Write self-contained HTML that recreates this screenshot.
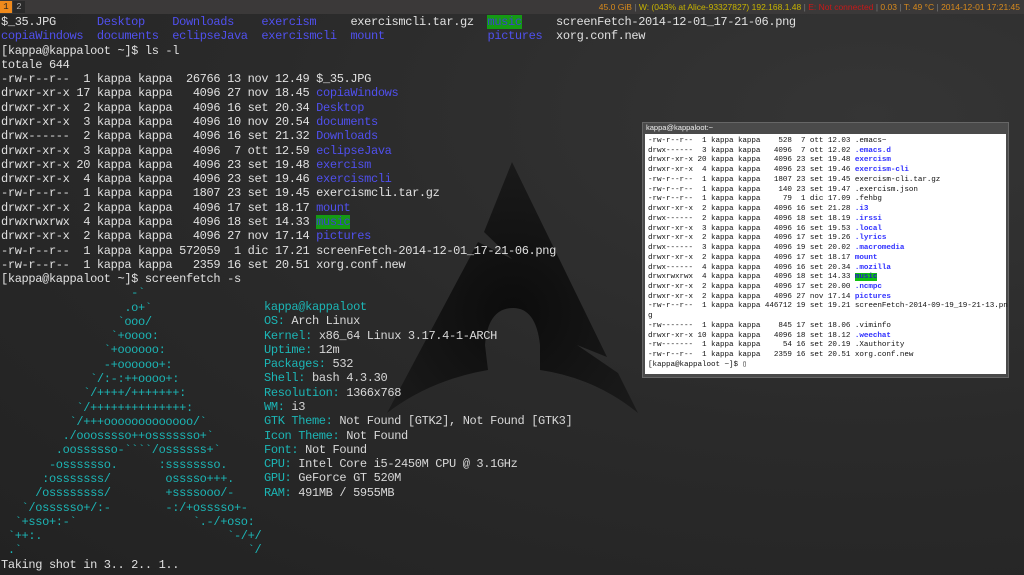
<!DOCTYPE html>
<html><head><meta charset="utf-8"><style>
html,body{margin:0;padding:0;width:1024px;height:575px;overflow:hidden;}
body{background:radial-gradient(ellipse at 85% 20%,#353535 0%,#2a2a2a 50%,#222 100%);position:relative;font-family:"Liberation Mono",monospace;}
#bar{position:absolute;left:0;top:0;width:1024px;height:14px;background:#3b3939;}
.tab{position:absolute;top:1px;height:12px;width:12px;font-size:9px;line-height:12px;text-align:center;}
#st{position:absolute;right:4px;top:1px;font-family:"Liberation Sans",sans-serif;font-size:8.5px;line-height:12px;white-space:pre;color:#c07020}
pre{margin:0;position:absolute;font-family:"Liberation Mono",monospace;font-size:12px;letter-spacing:-0.35px;line-height:14.28px;color:#e0e0e0;white-space:pre;}
.b{color:#5050ee}
.g{color:#4040d0;background:#149a14}
.c{color:#1cb5b5}
.v{color:#d8d8d8}
#win{position:absolute;left:642px;top:122px;width:367px;height:256px;background:#4a4a4a;border:1px solid #666;box-sizing:border-box;}
#wt{position:absolute;left:3px;top:0;font-family:"Liberation Sans",sans-serif;font-size:7.5px;color:#eee;line-height:10px}
#wb{position:absolute;left:2px;top:11px;width:361px;height:240px;background:#fff;}
#wb pre{position:absolute;left:3px;top:3px;font-size:7.6px;letter-spacing:-0.06px;line-height:9.74px;color:#111}
#wb .b{color:#3030ff;font-weight:bold}
#wb .g{color:#2020c0;background:#10c010;font-weight:bold}
</style></head><body>
<svg width="1024" height="575" style="position:absolute;left:0;top:0">
<defs><radialGradient id="lg" cx="50%" cy="60%" r="60%"><stop offset="0" stop-color="#0c0c0c"/><stop offset="1" stop-color="#1a1a1a"/></radialGradient></defs>
<path fill="url(#lg)" d="M512,162 L607,357 L577,345 L618,373 L638,413 Q595,378 540,370 L540,345 Q536,308 513,308 Q488,308 485,345 L488,370 Q430,380 387,413 L478,242 L512,259 L484,232 Z"/>
</svg>
<div id="bar">
<div class="tab" style="left:0;background:#f08a1c;color:#222">1</div>
<div class="tab" style="left:13px;background:#2a2a2a;color:#aaa">2</div>
<div id="st"><span style="color:#d88a1c">45.0 GiB</span> <span style="color:#777">|</span> <span style="color:#c8b400">W: (043% at Alice-93327827) 192.168.1.48</span> <span style="color:#777">|</span> <span style="color:#c81818">E: Not connected</span> <span style="color:#777">|</span> <span style="color:#d88a1c">0.03</span> <span style="color:#777">|</span> <span style="color:#d88a1c">T: 49 °C</span> <span style="color:#777">|</span> <span style="color:#d88a1c">2014-12-01 17:21:45</span></div>
</div>
<pre style="left:1px;top:15px">$_35.JPG      <span class="b">Desktop</span>    <span class="b">Downloads</span>    <span class="b">exercism</span>     exercismcli.tar.gz  <span class="g">music</span>     screenFetch-2014-12-01_17-21-06.png
<span class="b">copiaWindows</span>  <span class="b">documents</span>  <span class="b">eclipseJava</span>  <span class="b">exercismcli</span>  <span class="b">mount</span>               <span class="b">pictures</span>  xorg.conf.new
[kappa@kappaloot ~]$ ls -l
totale 644
-rw-r--r--  1 kappa kappa  26766 13 nov 12.49 $_35.JPG
drwxr-xr-x 17 kappa kappa   4096 27 nov 18.45 <span class="b">copiaWindows</span>
drwxr-xr-x  2 kappa kappa   4096 16 set 20.34 <span class="b">Desktop</span>
drwxr-xr-x  3 kappa kappa   4096 10 nov 20.54 <span class="b">documents</span>
drwx------  2 kappa kappa   4096 16 set 21.32 <span class="b">Downloads</span>
drwxr-xr-x  3 kappa kappa   4096  7 ott 12.59 <span class="b">eclipseJava</span>
drwxr-xr-x 20 kappa kappa   4096 23 set 19.48 <span class="b">exercism</span>
drwxr-xr-x  4 kappa kappa   4096 23 set 19.46 <span class="b">exercismcli</span>
-rw-r--r--  1 kappa kappa   1807 23 set 19.45 exercismcli.tar.gz
drwxr-xr-x  2 kappa kappa   4096 17 set 18.17 <span class="b">mount</span>
drwxrwxrwx  4 kappa kappa   4096 18 set 14.33 <span class="g">music</span>
drwxr-xr-x  2 kappa kappa   4096 27 nov 17.14 <span class="b">pictures</span>
-rw-r--r--  1 kappa kappa 572059  1 dic 17.21 screenFetch-2014-12-01_17-21-06.png
-rw-r--r--  1 kappa kappa   2359 16 set 20.51 xorg.conf.new
[kappa@kappaloot ~]$ screenfetch -s
<span class="c">                   -&#96;
                  .o+&#96;
                 &#96;ooo/
                &#96;+oooo:
               &#96;+oooooo:
               -+oooooo+:
             &#96;/:-:++oooo+:
            &#96;/++++/+++++++:
           &#96;/++++++++++++++:
          &#96;/+++ooooooooooooo/&#96;
         ./ooosssso++osssssso+&#96;
        .oossssso-&#96;&#96;&#96;&#96;/ossssss+&#96;
       -osssssso.      :ssssssso.
      :osssssss/        osssso+++.
     /ossssssss/        +ssssooo/-
   &#96;/ossssso+/:-        -:/+osssso+-
  &#96;+sso+:-&#96;                 &#96;.-/+oso:
 &#96;++:.                           &#96;-/+/
 .&#96;                                 &#96;/</span>
Taking shot in 3.. 2.. 1..</pre>
<pre style="left:264px;top:300px"><span class="c">kappa@kappaloot</span>
<span class="c">OS:</span> <span class="v">Arch Linux</span>
<span class="c">Kernel:</span> <span class="v">x86_64 Linux 3.17.4-1-ARCH</span>
<span class="c">Uptime:</span> <span class="v">12m</span>
<span class="c">Packages:</span> <span class="v">532</span>
<span class="c">Shell:</span> <span class="v">bash 4.3.30</span>
<span class="c">Resolution:</span> <span class="v">1366x768</span>
<span class="c">WM:</span> <span class="v">i3</span>
<span class="c">GTK Theme:</span> <span class="v">Not Found [GTK2], Not Found [GTK3]</span>
<span class="c">Icon Theme:</span> <span class="v">Not Found</span>
<span class="c">Font:</span> <span class="v">Not Found</span>
<span class="c">CPU:</span> <span class="v">Intel Core i5-2450M CPU @ 3.1GHz</span>
<span class="c">GPU:</span> <span class="v">GeForce GT 520M</span>
<span class="c">RAM:</span> <span class="v">491MB / 5955MB</span></pre>
<div id="win"><div id="wt">kappa@kappaloot:~</div><div id="wb"><pre>-rw-r--r--  1 kappa kappa    528  7 ott 12.03 .emacs~
drwx------  3 kappa kappa   4096  7 ott 12.02 <span class="b">.emacs.d</span>
drwxr-xr-x 20 kappa kappa   4096 23 set 19.48 <span class="b">exercism</span>
drwxr-xr-x  4 kappa kappa   4096 23 set 19.46 <span class="b">exercism-cli</span>
-rw-r--r--  1 kappa kappa   1807 23 set 19.45 exercism-cli.tar.gz
-rw-r--r--  1 kappa kappa    140 23 set 19.47 .exercism.json
-rw-r--r--  1 kappa kappa     79  1 dic 17.09 .fehbg
drwxr-xr-x  2 kappa kappa   4096 16 set 21.28 <span class="b">.i3</span>
drwx------  2 kappa kappa   4096 18 set 18.19 <span class="b">.irssi</span>
drwxr-xr-x  3 kappa kappa   4096 16 set 19.53 <span class="b">.local</span>
drwxr-xr-x  2 kappa kappa   4096 17 set 19.26 <span class="b">.lyrics</span>
drwx------  3 kappa kappa   4096 19 set 20.02 <span class="b">.macromedia</span>
drwxr-xr-x  2 kappa kappa   4096 17 set 18.17 <span class="b">mount</span>
drwx------  4 kappa kappa   4096 16 set 20.34 <span class="b">.mozilla</span>
drwxrwxrwx  4 kappa kappa   4096 18 set 14.33 <span class="g">music</span>
drwxr-xr-x  2 kappa kappa   4096 17 set 20.00 <span class="b">.ncmpc</span>
drwxr-xr-x  2 kappa kappa   4096 27 nov 17.14 <span class="b">pictures</span>
-rw-r--r--  1 kappa kappa 446712 19 set 19.21 screenFetch-2014-09-19_19-21-13.pn
g
-rw-------  1 kappa kappa    845 17 set 18.06 .viminfo
drwxr-xr-x 10 kappa kappa   4096 18 set 18.12 <span class="b">.weechat</span>
-rw-------  1 kappa kappa     54 16 set 20.19 .Xauthority
-rw-r--r--  1 kappa kappa   2359 16 set 20.51 xorg.conf.new
[kappa@kappaloot ~]$ &#9647;</pre></div></div>
</body></html>
